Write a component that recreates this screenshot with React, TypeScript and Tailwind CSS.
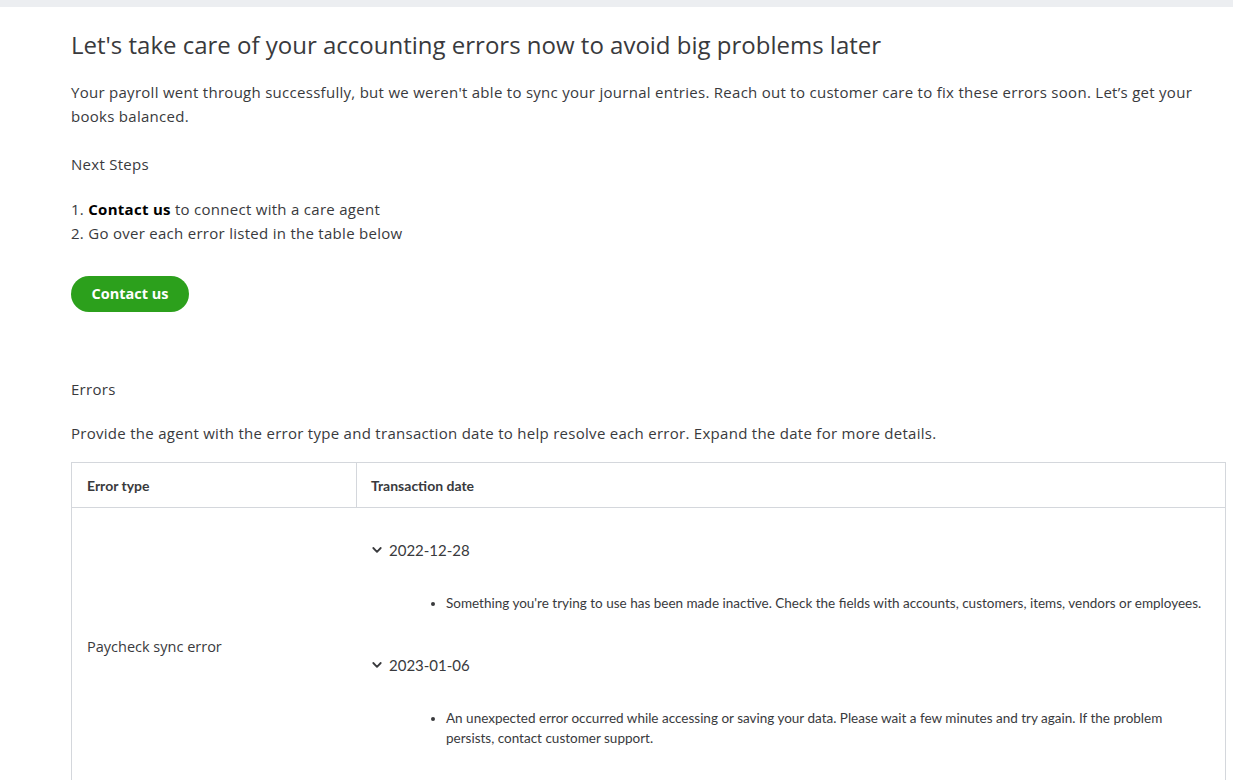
import React from "react";

function Chevron() {
  return (
    <svg width="12" height="12" viewBox="0 0 12 12" className="mr-[6px]" aria-hidden>
      <path d="M2.3 4 L6 7.8 L9.7 4" fill="none" stroke="#393a3d" strokeWidth="1.8" strokeLinecap="round" strokeLinejoin="round" />
    </svg>
  );
}

function DateBlock({ date, wide, children }: { date: string; wide?: boolean; children: React.ReactNode }) {
  return (
    <div>
      <div className="flex items-center h-[24px] text-[15px] text-[#393a3d]" style={{ fontFamily: "Lato, sans-serif" }}>
        <Chevron />
        <span>{date}</span>
      </div>
      <ul
        className={`mt-[31px] pl-[75px] ${wide ? "pr-[2px]" : "pr-[30px]"} text-[13.5px] leading-[20px] text-[#393a3d] list-disc`}
        style={{ fontFamily: "Lato, sans-serif" }}
      >
        {children}
      </ul>
    </div>
  );
}

const body = "text-[15px] leading-[24px] tracking-[0.28px] text-[#393a3d]";

export default function App() {
  return (
    <div className="min-h-[780px] bg-white" style={{ fontFamily: "'Open Sans', Lato, sans-serif" }}>
      <div className="h-[7px] bg-[#eceef1]" />
      <div className="pl-[71px] pr-[7px]">
        <h1 className="mt-[23px] text-[24px] leading-[30px] text-[#393a3d]">
          Let's take care of your accounting errors now to avoid big problems later
        </h1>
        <p className={`mt-[20px] pr-[30px] ${body}`}>
          Your payroll went through successfully, but we weren't able to sync your journal entries. Reach out to customer care to fix these errors soon. Let’s get your books balanced.
        </p>
        <div className={`mt-[24px] ${body}`}>Next Steps</div>
        <ol className={`mt-[21px] ${body}`}>
          <li>1. <span className="font-bold text-[#000]">Contact us</span> to connect with a care agent</li>
          <li>2. Go over each error listed in the table below</li>
        </ol>
        <button className="mt-[31px] h-[36px] w-[118px] rounded-full bg-[#2ca01c] text-white font-bold text-[14.5px]">
          Contact us
        </button>
        <div className={`mt-[65px] ${body}`}>Errors</div>
        <p className={`mt-[20px] ${body}`}>
          Provide the agent with the error type and transaction date to help resolve each error. Expand the date for more details.
        </p>
        <div className="mt-[17px] border border-[#d4d7dc]">
          <div className="grid grid-cols-[285px_1fr] h-[45px] border-b border-[#d4d7dc] text-[14px] font-bold text-[#393a3d]" style={{ fontFamily: "Lato, sans-serif" }}>
            <div className="flex items-center pl-[15px] border-r border-[#d4d7dc]">Error type</div>
            <div className="flex items-center pl-[14px]">Transaction date</div>
          </div>
          <div className="grid grid-cols-[285px_1fr]">
            <div className="flex items-center pl-[15px] text-[14.5px] text-[#393a3d]">Paycheck sync error</div>
            <div className="pl-[14px] pt-[30px] pb-[37px] flex flex-col gap-[40px]">
              <DateBlock date="2022-12-28" wide>
                <li>Something you're trying to use has been made inactive. Check the fields with accounts, customers, items, vendors or employees.</li>
              </DateBlock>
              <DateBlock date="2023-01-06">
                <li>An unexpected error occurred while accessing or saving your data. Please wait a few minutes and try again. If the problem persists, contact customer support.</li>
              </DateBlock>
            </div>
          </div>
        </div>
      </div>
    </div>
  );
}
